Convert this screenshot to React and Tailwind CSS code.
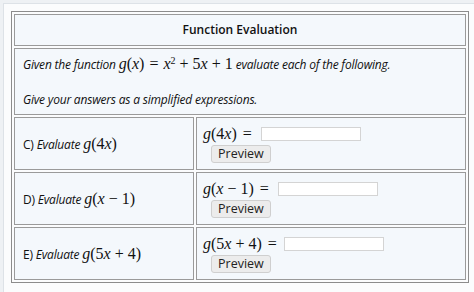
import React from "react";

const sans = { fontFamily: '"Open Sans", "Noto Sans", sans-serif' };
const serif = { fontFamily: '"Liberation Serif", "DejaVu Serif", serif' };

function V({ children }) {
  return <i>{children}</i>;
}

function M({ children }) {
  return (
    <span className="whitespace-nowrap text-[16px] not-italic tracking-normal" style={serif}>
      {children}
    </span>
  );
}

const rows = [
  {
    label: "C)",
    arg: (
      <>
        4<V>x</V>
      </>
    ),
  },
  {
    label: "D)",
    arg: (
      <>
        <V>x</V>
        <span className="mx-[4px]">−</span>1
      </>
    ),
  },
  {
    label: "E)",
    arg: (
      <>
        5<V>x</V>
        <span className="mx-[4px]">+</span>4
      </>
    ),
  },
];

export default function App() {
  return (
    <div className="h-screen overflow-hidden bg-[#eef1f4] pl-[3px] pt-[3px]" style={sans}>
      <div className="h-full border-l border-t border-[#dde2e7] bg-[#fbfcfd] pl-[7px] pt-[7px]">
        <table className="w-[458px] border-separate border-spacing-[2px] border border-[#8c8c8c] text-[12px] tracking-[-0.2px] text-[#111]">
          <tbody>
            <tr>
              <td
                colSpan={2}
                className="h-[32px] border border-[#9a9a9a] bg-[#f4f8fc] text-center text-[12px] font-semibold tracking-normal"
              >
                Function Evaluation
              </td>
            </tr>
            <tr>
              <td colSpan={2} className="h-[67px] border border-[#9a9a9a] bg-[#f4f8fc] px-[8px] align-top">
                <p className="mt-[6px] italic leading-[18px]">
                  Given the function{" "}
                  <M>
                    <V>g</V>(<V>x</V>)<span className="mx-[5px]">=</span>
                    <V>x</V>
                    <sup className="text-[10px]">2</sup>
                    <span className="mx-[4px]">+</span>5<V>x</V>
                    <span className="mx-[4px]">+</span>1
                  </M>{" "}
                  evaluate each of the following.
                </p>
                <p className="mt-[17px] italic leading-[18px]">Give your answers as a simplified expressions.</p>
              </td>
            </tr>
            {rows.map((r, i) => (
              <tr key={r.label}>
                <td className="h-[53px] w-[180px] border border-[#9a9a9a] bg-[#f4f8fc] px-[8px]">
                  {r.label} <i>Evaluate</i>{" "}
                  <M>
                    <V>g</V>({r.arg})
                  </M>
                </td>
                <td className="border border-[#9a9a9a] bg-[#f4f8fc] pl-[6px] align-top">
                  <div className="mt-[6px] flex h-[20px] items-center">
                    <M>
                      <V>g</V>({r.arg})<span className="ml-[6px]">=</span>
                    </M>
                    <span
                      className={
                        i === 2
                          ? "ml-[7px] inline-block h-[14px] w-[100px] border border-[#d4d4d4] bg-white"
                          : "ml-[9px] inline-block h-[14px] w-[100px] border border-[#d4d4d4] bg-white"
                      }
                    />
                  </div>
                  <button className="mb-[3px] ml-[8px] mt-[1px] rounded-[3px] border border-[#cfcfcf] bg-[#ececec] px-[6px] text-[12.5px] leading-[16px] tracking-normal text-[#222]">
                    Preview
                  </button>
                </td>
              </tr>
            ))}
          </tbody>
        </table>
      </div>
    </div>
  );
}
